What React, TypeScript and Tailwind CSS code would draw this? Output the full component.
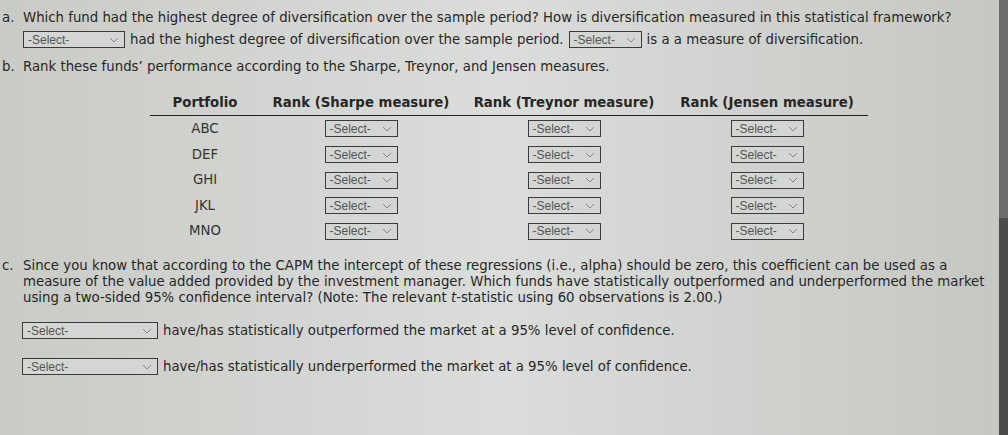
import React from 'react';

const Chevron = () => (
  <svg width="10" height="6" viewBox="0 0 10 6" className="shrink-0">
    <polyline points="1,1 5,5 9,1" fill="none" stroke="#858785" strokeWidth="1" />
  </svg>
);

const Select: React.FC<{ w: string }> = ({ w }) => (
  <div
    className={`${w} h-[17px] border border-[#3a3b3a] bg-[#d4d6d3] flex items-center justify-between pl-[4px] pr-[5px] shrink-0`}
  >
    <span className="text-[12px] text-[#535553] leading-none font-['Liberation_Sans',Arial,sans-serif]">-Select-</span>
    <Chevron />
  </div>
);

const rows = ['ABC', 'DEF', 'GHI', 'JKL', 'MNO'];

export default function App() {
  return (
    <div className="w-[1008px] h-[435px] flex overflow-hidden bg-gradient-to-r from-[#c9cbc7] via-[#dbdddb] to-[#c5c7c3] text-[#262726] font-['DejaVu_Sans',Verdana,sans-serif] text-[13.3px]">
      <div className="flex-1 pl-[2px] pt-[10px]">
        {/* a */}
        <div className="flex leading-[16px]">
          <span className="w-[21px] shrink-0">a.</span>
          <span>Which fund had the highest degree of diversification over the sample period? How is diversification measured in this statistical framework?</span>
        </div>
        <div className="flex items-center mt-[5px] ml-[21px] gap-[5px] leading-[16px]">
          <Select w="w-[102px]" />
          <span>had the highest degree of diversification over the sample period.</span>
          <Select w="w-[73px]" />
          <span>is a a measure of diversification.</span>
        </div>

        {/* b */}
        <div className="flex leading-[16px] mt-[11px]">
          <span className="w-[21px] shrink-0">b.</span>
          <span>Rank these funds’ performance according to the Sharpe, Treynor, and Jensen measures.</span>
        </div>

        <table className="ml-[148px] mt-[16px] border-collapse">
          <thead>
            <tr className="font-bold border-b-[1.5px] border-[#222]">
              <th className="w-[110px] h-[24px] text-center font-bold">Portfolio</th>
              <th className="w-[202px] text-center font-bold">Rank (Sharpe measure)</th>
              <th className="w-[204px] text-center font-bold">Rank (Treynor measure)</th>
              <th className="w-[202px] text-center font-bold">Rank (Jensen measure)</th>
            </tr>
          </thead>
          <tbody>
            {rows.map((r, i) => (
              <tr key={r} className={i === 0 ? 'h-[27px]' : 'h-[25.5px]'}>
                <td className="text-center align-middle text-[#333433]">{r}</td>
                <td className="align-middle">
                  <div className="flex justify-center"><Select w="w-[73px]" /></div>
                </td>
                <td className="align-middle">
                  <div className="flex justify-center"><Select w="w-[73px]" /></div>
                </td>
                <td className="align-middle">
                  <div className="flex justify-center"><Select w="w-[73px]" /></div>
                </td>
              </tr>
            ))}
          </tbody>
        </table>

        {/* c */}
        <div className="flex leading-[16px] mt-[14px]">
          <span className="w-[21px] shrink-0">c.</span>
          <span className="w-[966px]">
            Since you know that according to the CAPM the intercept of these regressions (i.e., alpha) should be zero, this coefficient can be used as a measure of the value added provided by the investment manager. Which funds have statistically outperformed and underperformed the market using a two-sided 95% confidence interval? (Note: The relevant <i>t</i>-statistic using 60 observations is 2.00.)
          </span>
        </div>
        <div className="flex items-center mt-[16px] ml-[20px] gap-[5px] leading-[16px]">
          <Select w="w-[136px]" />
          <span>have/has statistically outperformed the market at a 95% level of confidence.</span>
        </div>
        <div className="flex items-center mt-[19px] ml-[20px] gap-[5px] leading-[16px]">
          <Select w="w-[136px]" />
          <span>have/has statistically underperformed the market at a 95% level of confidence.</span>
        </div>
      </div>
      <div className="w-[9px] shrink-0 flex flex-col">
        <div className="h-[218px] bg-[#6b6d6b]" />
        <div className="flex-1 bg-[#4a4b4a]" />
      </div>
    </div>
  );
}
